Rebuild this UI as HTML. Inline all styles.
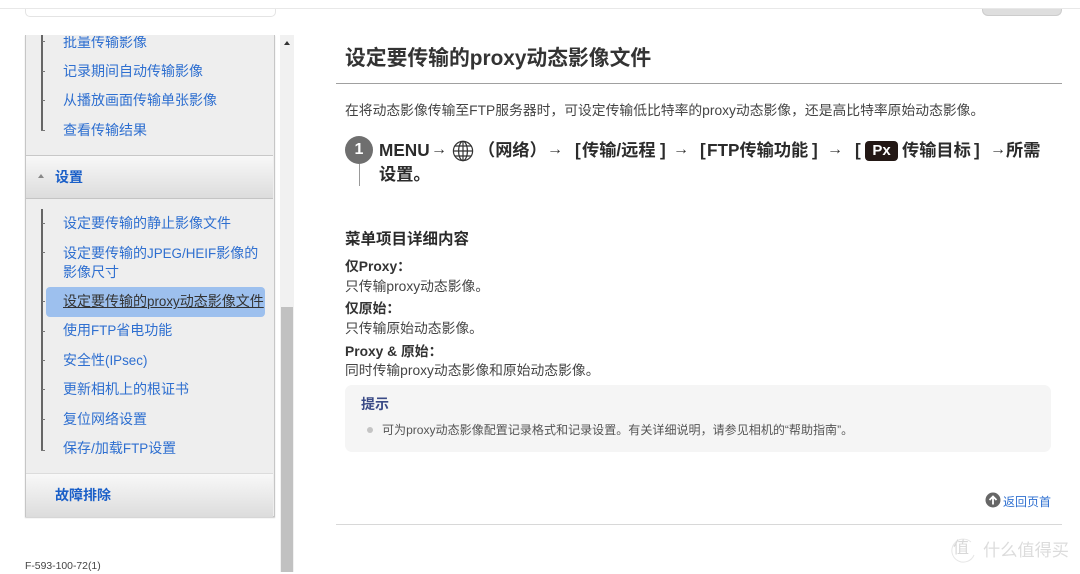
<!DOCTYPE html>
<html lang="zh"><head><meta charset="utf-8">
<style>
html,body{margin:0;padding:0;background:#fff}
body{width:1080px;height:572px;position:relative;overflow:hidden;font-family:"Liberation Sans","Noto Sans CJK SC",sans-serif;color:#333;filter:blur(.3px)}
.a{position:absolute;white-space:nowrap}
.l{position:absolute;left:63px;font-size:14px;line-height:18px;color:#2e6fd0;white-space:nowrap}
.n{font-size:13.4px}
.t{position:absolute;left:42px;width:3px;height:1px;background:#777}
.h{position:absolute;left:26px;width:247px;background:linear-gradient(#f8f8f8,#dcdcdc)}
.hl{position:absolute;left:55px;font-size:14px;font-weight:bold;color:#1a5fc8;line-height:18px;white-space:nowrap}
.b{left:345px;font-size:13.8px;line-height:18px;color:#444}
.k{left:345px;font-size:13.8px;line-height:18px;font-weight:bold;color:#333}
.s{font-size:17.2px;font-weight:bold;line-height:24px;color:#2b2b2b;top:138px}
.r{font-size:16px;font-weight:normal;line-height:24px;color:#333;top:138px}
</style></head><body>
<div class="a" style="left:0;top:8px;width:1080px;height:1px;background:#e8e8e8"></div>
<div class="a" style="left:25px;top:9px;width:249px;height:7px;border:1px solid #e4e4e4;border-top:0;border-radius:0 0 5px 5px"></div>
<div class="a" style="left:982px;top:9px;width:78px;height:6px;background:#dedede;border:1px solid #ccc;border-top:0;border-radius:0 0 6px 6px"></div>

<div class="a" style="left:25px;top:35px;width:248px;height:481px;background:#eeeeee;border:1px solid #c6c6c6;border-top:0;box-shadow:0 1px 1px #ccc"></div>
<div class="a" style="left:41px;top:35px;width:1.5px;height:95px;background:#666"></div>
<div class="a" style="left:41px;top:130px;width:4px;height:1px;background:#777"></div>
<div class="t" style="top:41px"></div><div class="t" style="top:71px"></div><div class="t" style="top:100px"></div>
<div class="a" style="left:0;top:18px;width:280px;height:17px;background:#fff"></div>
<div class="l" style="top:33px;clip-path:inset(3px 0 0 0)">批量传输影像</div>
<div class="l" style="top:62px">记录期间自动传输影像</div>
<div class="l" style="top:91px">从播放画面传输单张影像</div>
<div class="l" style="top:121px">查看传输结果</div>

<div class="h" style="top:155px;height:42px;border-top:1px solid #c8c8c8;border-bottom:1px solid #c4c4c4"></div>
<div class="a" style="left:37.5px;top:174px;width:0;height:0;border:3px solid transparent;border-top:0;border-bottom:4px solid #888"></div>
<div class="hl" style="top:168px">设置</div>

<div class="a" style="left:41px;top:209px;width:1.5px;height:241px;background:#666"></div>
<div class="a" style="left:41px;top:450px;width:4px;height:1px;background:#777"></div>
<div class="t" style="top:223px"></div><div class="t" style="top:252px"></div><div class="t" style="top:301px"></div><div class="t" style="top:331px"></div><div class="t" style="top:360px"></div><div class="t" style="top:389px"></div><div class="t" style="top:419px"></div>
<div class="l" style="top:214px">设定要传输的静止影像文件</div>
<div class="l" style="top:244px">设定要传输的<span class="n">JPEG/HEIF</span>影像的</div>
<div class="l" style="top:263px">影像尺寸</div>
<div class="a" style="left:46px;top:287px;width:219px;height:30px;background:#9dc0ee;border-radius:4px"></div>
<div class="l" style="top:292px;color:#333;text-decoration:underline">设定要传输的<span class="n">proxy</span>动态影像文件</div>
<div class="l" style="top:321px">使用<span class="n">FTP</span>省电功能</div>
<div class="l" style="top:351px">安全性<span class="n">(IPsec)</span></div>
<div class="l" style="top:380px">更新相机上的根证书</div>
<div class="l" style="top:410px">复位网络设置</div>
<div class="l" style="top:439px">保存/加载<span class="n">FTP</span>设置</div>

<div class="h" style="top:473px;height:43px;border-top:1px solid #dcdcdc"></div>
<div class="hl" style="top:486px">故障排除</div>
<div class="a" style="left:25px;top:560px;font-size:10.4px;line-height:14px;color:#444">F-593-100-72(1)</div>

<div class="a" style="left:280px;top:35px;width:14px;height:537px;background:#f1f1f1"></div>
<div class="a" style="left:281px;top:307px;width:12px;height:265px;background:#c1c1c1"></div>
<div class="a" style="left:284px;top:41px;width:0;height:0;border:3px solid transparent;border-top:0;border-bottom:4px solid #333"></div>

<div class="a" style="left:345px;top:44px;font-size:20.8px;font-weight:bold;line-height:30px;color:#333">设定要传输的proxy动态影像文件</div>
<div class="a" style="left:336px;top:83px;width:726px;height:1px;background:#a0a0a0"></div>
<div class="a b" style="top:102px">在将动态影像传输至FTP服务器时，可设定传输低比特率的proxy动态影像，还是高比特率原始动态影像。</div>

<div class="a" style="left:345px;top:136px;width:28px;height:28px;border-radius:50%;background:#6f6f6f;color:#fff;font-weight:bold;font-size:16px;line-height:28px;text-align:center">1</div>
<div class="a" style="left:359px;top:164px;width:1px;height:22px;background:#999"></div>
<div class="a s" style="left:379px">MENU</div>
<div class="a r" style="left:431px">→</div>
<svg class="a" style="left:452px;top:140px" width="22" height="22" viewBox="0 0 22 22" fill="none" stroke="#333" stroke-width="1.2"><circle cx="11" cy="11" r="9.6"/><ellipse cx="11" cy="11" rx="4.4" ry="9.6"/><path d="M11 1.4V20.6M1.4 11H20.6M2.8 6H19.2M2.8 16H19.2"/></svg>
<div class="a s" style="left:478px">（网络）</div>
<div class="a r" style="left:547px">→</div>
<div class="a s" style="left:575px">[</div>
<div class="a s" style="left:582px">传输/远程</div>
<div class="a s" style="left:660px">]</div>
<div class="a r" style="left:673px">→</div>
<div class="a s" style="left:700px">[</div>
<div class="a s" style="left:707px">FTP传输功能</div>
<div class="a s" style="left:812px">]</div>
<div class="a r" style="left:827px">→</div>
<div class="a s" style="left:855px">[</div>
<div class="a" style="left:865px;top:141px;width:33px;height:20px;border-radius:4px;background:#231815;color:#fff;font-weight:bold;font-size:15px;line-height:20px;text-align:center">Px</div>
<div class="a s" style="left:902px">传输目标</div>
<div class="a s" style="left:974px">]</div>
<div class="a r" style="left:990px">→</div>
<div class="a s" style="left:1006px">所需</div>
<div class="a s" style="left:379px;top:162px">设置。</div>

<div class="a" style="left:345px;top:230px;font-size:15.5px;font-weight:bold;line-height:20px;color:#2b2b2b">菜单项目详细内容</div>
<div class="a k" style="top:258px">仅Proxy：</div>
<div class="a b" style="top:278px">只传输proxy动态影像。</div>
<div class="a k" style="top:300px">仅原始：</div>
<div class="a b" style="top:320px">只传输原始动态影像。</div>
<div class="a k" style="top:343px">Proxy &amp; 原始：</div>
<div class="a b" style="top:362px">同时传输proxy动态影像和原始动态影像。</div>

<div class="a" style="left:345px;top:385px;width:706px;height:67px;background:#f5f5f5;border-radius:7px"></div>
<div class="a" style="left:361px;top:395px;font-size:14px;font-weight:bold;line-height:18px;color:#3a4a86">提示</div>
<div class="a" style="left:367px;top:427px;width:6px;height:6px;border-radius:50%;background:#c4c4c4"></div>
<div class="a" style="left:382px;top:421px;font-size:12.05px;line-height:18px;color:#555">可为proxy动态影像配置记录格式和记录设置。有关详细说明，请参见相机的“帮助指南”。</div>

<svg class="a" style="left:985px;top:492px" width="16" height="16" viewBox="0 0 16 16"><circle cx="8" cy="8" r="7.5" fill="#666"/><path d="M8 12.5V4.5M4.5 8L8 4.5L11.5 8" fill="none" stroke="#fff" stroke-width="1.8"/></svg>
<div class="a" style="left:1003px;top:493px;font-size:12px;line-height:18px;color:#2e6fd0">返回页首</div>
<div class="a" style="left:336px;top:524px;width:726px;height:1px;background:#d8d8d8"></div>

<svg class="a" style="left:951px;top:538px" width="25" height="25" viewBox="0 0 25 25" fill="none"><path d="M20 4A11.5 11.5 0 1 0 23 17" stroke="#e6e6e6" stroke-width="1"/></svg>
<div class="a" style="left:953px;top:540px;font-size:16px;line-height:18px;color:#d8d8d8">值</div>
<div class="a" style="left:983px;top:540px;font-size:17.2px;line-height:20px;color:#dcdcdc">什么值得买</div>
</body></html>
